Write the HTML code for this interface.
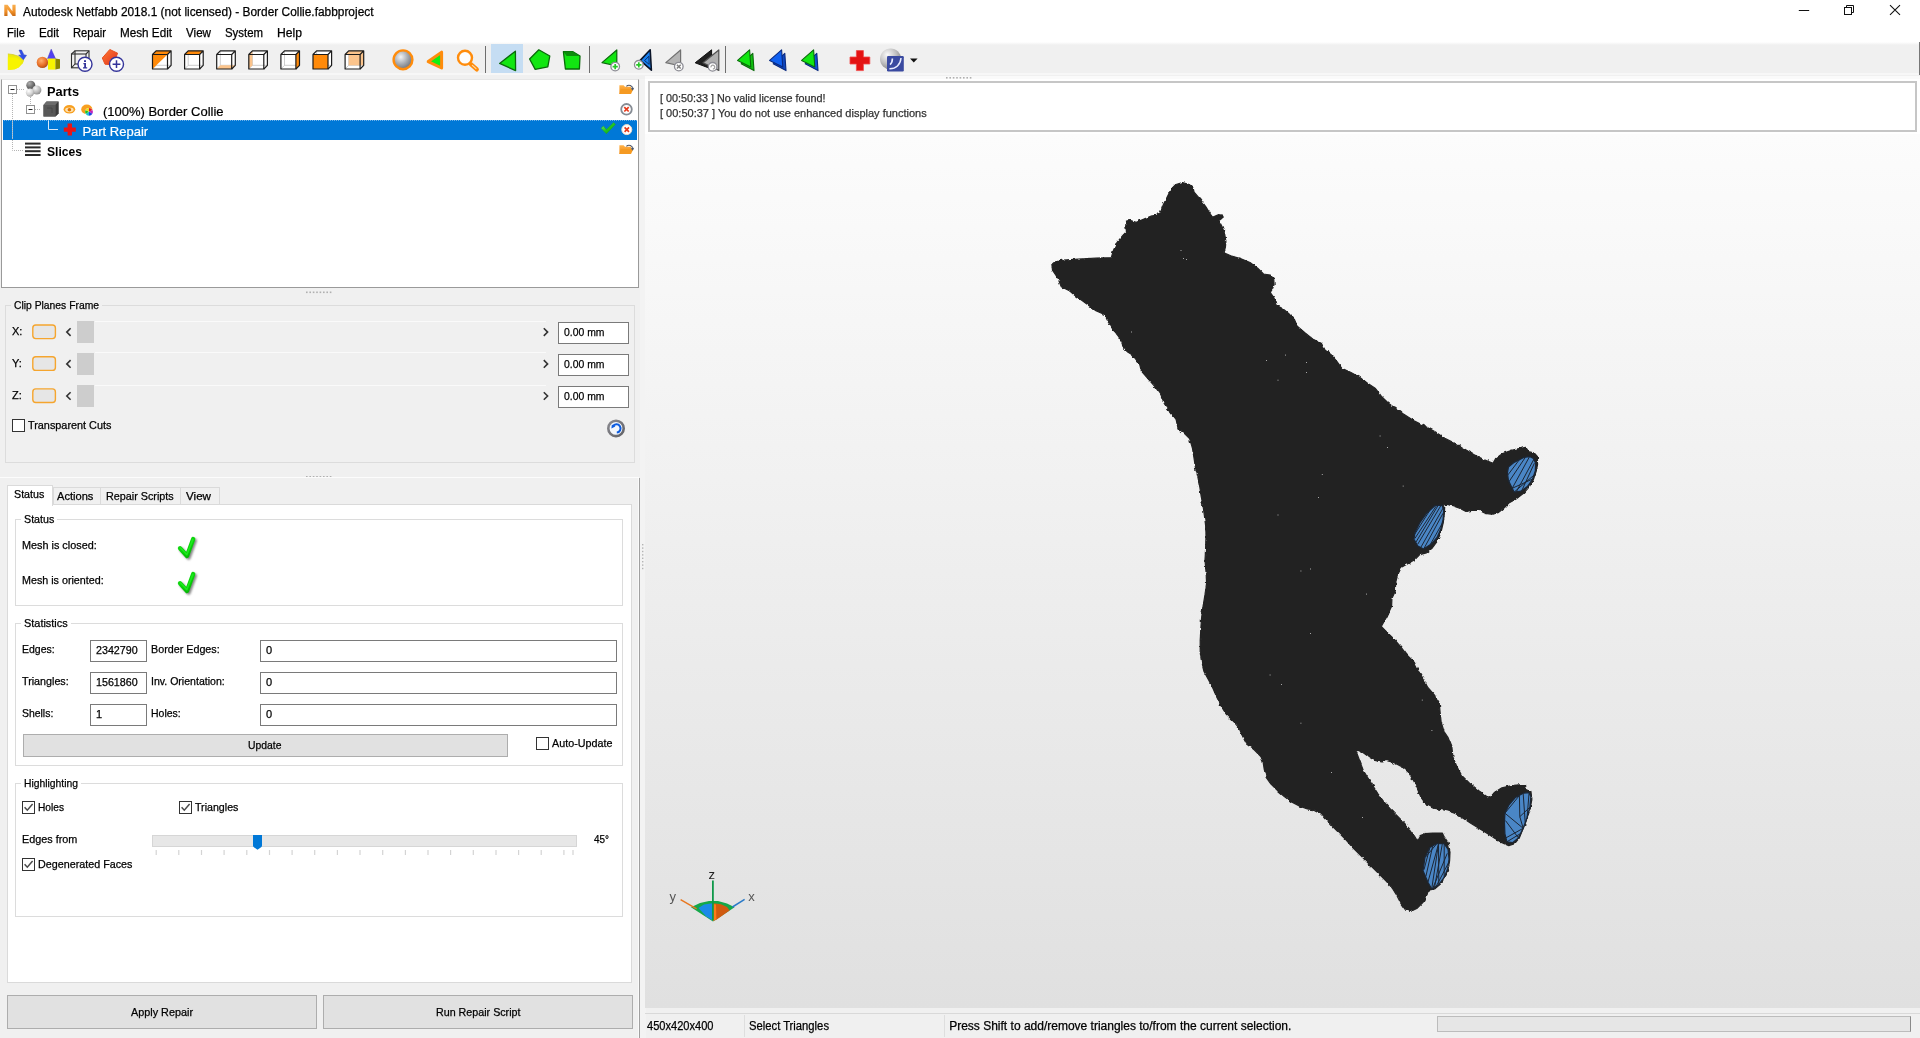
<!DOCTYPE html>
<html>
<head>
<meta charset="utf-8">
<title>Autodesk Netfabb 2018.1 (not licensed) - Border Collie.fabbproject</title>
<style>
*{box-sizing:border-box;margin:0;padding:0}
html,body{width:1920px;height:1038px;overflow:hidden;background:#f0f0f0;font-family:"Liberation Sans",sans-serif;font-size:11px;color:#000}
#app{position:relative;width:1920px;height:1038px;overflow:hidden;background:#f0f0f0;opacity:.9999}
.a{position:absolute}
.t{position:absolute;white-space:nowrap;transform-origin:0 50%;font-family:"Liberation Sans",sans-serif}
svg{position:absolute;overflow:visible}
</style>
</head>
<body>
<div id="app">
<div class="a" style="left:0px;top:0px;width:1920px;height:43px;background:#fff;"></div>
<div class="a" style="left:0px;top:42px;width:1920px;height:3px;background:linear-gradient(#fff,#f0f0f0);"></div>
<div class="t" style="left:23.0px;top:3.5px;font-size:12px;line-height:16px;color:#000;transform:scaleX(0.9914);-webkit-text-stroke:0.25px #000;">Autodesk Netfabb 2018.1 (not licensed) - Border Collie.fabbproject</div>
<div class="t" style="left:7.0px;top:25.0px;font-size:12px;line-height:16px;color:#000;transform:scaleX(0.9309);-webkit-text-stroke:0.25px #000;">File</div>
<div class="t" style="left:39.0px;top:25.0px;font-size:12px;line-height:16px;color:#000;transform:scaleX(0.9672);-webkit-text-stroke:0.25px #000;">Edit</div>
<div class="t" style="left:73.0px;top:25.0px;font-size:12px;line-height:16px;color:#000;transform:scaleX(0.9335);-webkit-text-stroke:0.25px #000;">Repair</div>
<div class="t" style="left:120.0px;top:25.0px;font-size:12px;line-height:16px;color:#000;transform:scaleX(0.9746);-webkit-text-stroke:0.25px #000;">Mesh Edit</div>
<div class="t" style="left:186.0px;top:25.0px;font-size:12px;line-height:16px;color:#000;transform:scaleX(0.9693);-webkit-text-stroke:0.25px #000;">View</div>
<div class="t" style="left:225.0px;top:25.0px;font-size:12px;line-height:16px;color:#000;transform:scaleX(0.9498);-webkit-text-stroke:0.25px #000;">System</div>
<div class="t" style="left:277.0px;top:25.0px;font-size:12px;line-height:16px;color:#000;transform:scaleX(1.0130);-webkit-text-stroke:0.25px #000;">Help</div>
<svg width="1920" height="44" viewBox="0 0 1920 44" style="left:0;top:0">
<defs><linearGradient id="gN" x1="0" y1="0" x2="0" y2="1"><stop offset="0" stop-color="#f9b050"/><stop offset="0.6" stop-color="#f09028"/><stop offset="1" stop-color="#c86a14"/></linearGradient></defs>
<path d="M4.3 16 V4.8 H7.6 L12.4 11.2 V4.8 H15.6 V16 H12.6 L7.5 9.2 V16 Z" fill="url(#gN)"/>
<path d="M1798.8 10.5 H1809.2" stroke="#111" stroke-width="1"/>
<path d="M1846.5 7.5 V5.5 H1853.5 V12.5 H1851.5" fill="none" stroke="#111" stroke-width="1"/>
<rect x="1844.5" y="7.5" width="7" height="7" fill="none" stroke="#111" stroke-width="1"/>
<path d="M1890 5.2 L1900 14.8 M1900 5.2 L1890 14.8" stroke="#111" stroke-width="1.1"/>
</svg>
<svg id="tbsvg" width="1920" height="80" viewBox="0 0 1920 80" style="left:0;top:0">
<defs>
<radialGradient id="gSph" cx="0.38" cy="0.35" r="0.7"><stop offset="0" stop-color="#f2f4f6"/><stop offset="0.55" stop-color="#a4a8ae"/><stop offset="1" stop-color="#6a6e76"/></radialGradient>
<radialGradient id="gOr" cx="0.4" cy="0.35" r="0.7"><stop offset="0" stop-color="#ffb070"/><stop offset="0.6" stop-color="#e87028"/><stop offset="1" stop-color="#a84810"/></radialGradient>
<linearGradient id="gRed" x1="0" y1="0" x2="1" y2="1"><stop offset="0" stop-color="#ff7a30"/><stop offset="1" stop-color="#e03020"/></linearGradient>
<radialGradient id="gSph2" cx="0.35" cy="0.3" r="0.75"><stop offset="0" stop-color="#fafafa"/><stop offset="0.55" stop-color="#c0c0c0"/><stop offset="1" stop-color="#848484"/></radialGradient>
</defs>
<rect x="491" y="44" width="32" height="31" fill="#c5ddf3"/>
<line x1="485.5" y1="46" x2="485.5" y2="74" stroke="#6e6e6e" stroke-width="1"/>
<line x1="589.5" y1="46" x2="589.5" y2="74" stroke="#6e6e6e" stroke-width="1"/>
<line x1="725.5" y1="46" x2="725.5" y2="74" stroke="#6e6e6e" stroke-width="1"/>
<path d="M7.9 53.9 L13 54.6 L18.7 56.3 L24 60.7 L22.7 63.5 L19 67.3 L14.9 69.2 L7.9 70 Z" fill="#ecea10"/>
<path d="M7.9 57.2 L16 57.6 L21.5 60.8 L19 67.3 L14.9 69.2 L7.9 70 Z" fill="#f8f400"/>
<path d="M7.9 53.9 L13 54.6 L18.7 56.3 L24 60.7" fill="none" stroke="#d4cc30" stroke-width="0.8"/>
<path d="M19 50.1 L21.5 50.1 L24 54.9 L26.5 55.3 L23.4 59.8 L18.7 55.1 L21.4 55.2 Z" fill="#3050e8" stroke="#2838b8" stroke-width="0.5" stroke-linejoin="round"/>
<circle cx="42.4" cy="62.4" r="5.7" fill="url(#gOr)"/>
<path d="M51.2 49.2 L55.4 58.5 L47.6 58.5 Z" fill="#5040f0" stroke="#3828c0" stroke-width="0.5"/>
<rect x="48" y="58.6" width="7.4" height="11" fill="#f8f400"/>
<path d="M55.4 58.6 L60 59.2 L60 68.4 L55.4 69.6 Z" fill="#8a8400"/>
<g fill="none" stroke="#303030" stroke-width="1.1"><rect x="71.5" y="54" width="14.5" height="13.8"/><rect x="75" y="50.8" width="14" height="13.2"/><path d="M71.5 54 L75 50.8 M86 54 L89 50.8 M71.5 67.8 L75 64"/></g>
<circle cx="85" cy="64.2" r="7" fill="#fff" stroke="#34349a" stroke-width="1.4"/>
<path d="M84 60.2 h2 v1.8 h-2z M83.4 63 h2.6 v4.2 h1.2 v1.2 h-4.2 v-1.2 h1.2 v-3 h-0.8z" fill="#34349a"/>
<path d="M102.3 58 L109.8 49.5 L117.6 53.2 L113 64.8 L105 64.2 Z" fill="url(#gRed)" stroke="#e85020" stroke-width="1" stroke-linejoin="round"/>
<circle cx="116.5" cy="64.2" r="7" fill="#fff" stroke="#34349a" stroke-width="1.4"/>
<path d="M112.6 64.2 h7.8 M116.5 60.3 v7.8" stroke="#34349a" stroke-width="1.5"/>
<path d="M152.5 54.5 L156.1 50.8 L171.1 50.8 L171.1 65.3 L167.5 69.0 L152.5 69.0 Z" fill="#fff"/><path d="M156.1 50.8 L156.1 65.3 L171.1 65.3 M156.1 65.3 L152.5 69.0" fill="none" stroke="#b8b8b8" stroke-width="0.7"/><path d="M152.5 54.5 L156.1 50.8 L171.1 50.8 L167.5 54.5 Z" fill="#ff8a0a"/><path d="M152.5 54.5 L167.5 54.5 L152.5 69.0 Z" fill="#ff8a0a"/><g fill="none" stroke="#1c1c1c" stroke-width="1.2" stroke-linejoin="round"><rect x="152.5" y="54.5" width="15" height="14.5"/><path d="M152.5 54.5 L156.1 50.8 L171.1 50.8 L171.1 65.3 L167.5 69.0 M167.5 54.5 L171.1 50.8"/></g>
<path d="M184.6 54.5 L188.2 50.8 L203.2 50.8 L203.2 65.3 L199.6 69.0 L184.6 69.0 Z" fill="#fff"/><path d="M188.2 50.8 L188.2 65.3 L203.2 65.3 M188.2 65.3 L184.6 69.0" fill="none" stroke="#b8b8b8" stroke-width="0.7"/><path d="M184.6 54.5 L188.2 50.8 L203.2 50.8 L199.6 54.5 Z" fill="#ff8a0a"/><g fill="none" stroke="#1c1c1c" stroke-width="1.2" stroke-linejoin="round"><rect x="184.6" y="54.5" width="15" height="14.5"/><path d="M184.6 54.5 L188.2 50.8 L203.2 50.8 L203.2 65.3 L199.6 69.0 M199.6 54.5 L203.2 50.8"/></g>
<path d="M216.7 54.5 L220.29999999999998 50.8 L235.29999999999998 50.8 L235.29999999999998 65.3 L231.7 69.0 L216.7 69.0 Z" fill="#fff"/><path d="M220.29999999999998 50.8 L220.29999999999998 65.3 L235.29999999999998 65.3 M220.29999999999998 65.3 L216.7 69.0" fill="none" stroke="#b8b8b8" stroke-width="0.7"/><path d="M216.7 69.0 L220.29999999999998 65.3 L235.29999999999998 65.3 L231.7 69.0 Z" fill="#fbc48c"/><g fill="none" stroke="#1c1c1c" stroke-width="1.2" stroke-linejoin="round"><rect x="216.7" y="54.5" width="15" height="14.5"/><path d="M216.7 54.5 L220.29999999999998 50.8 L235.29999999999998 50.8 L235.29999999999998 65.3 L231.7 69.0 M231.7 54.5 L235.29999999999998 50.8"/></g>
<path d="M248.8 54.5 L252.4 50.8 L267.40000000000003 50.8 L267.40000000000003 65.3 L263.8 69.0 L248.8 69.0 Z" fill="#fff"/><path d="M252.4 50.8 L252.4 65.3 L267.40000000000003 65.3 M252.4 65.3 L248.8 69.0" fill="none" stroke="#b8b8b8" stroke-width="0.7"/><path d="M248.8 54.5 L252.4 50.8 L252.4 65.3 L248.8 69.0 Z" fill="#fbc48c"/><g fill="none" stroke="#1c1c1c" stroke-width="1.2" stroke-linejoin="round"><rect x="248.8" y="54.5" width="15" height="14.5"/><path d="M248.8 54.5 L252.4 50.8 L267.40000000000003 50.8 L267.40000000000003 65.3 L263.8 69.0 M263.8 54.5 L267.40000000000003 50.8"/></g>
<path d="M280.9 54.5 L284.5 50.8 L299.5 50.8 L299.5 65.3 L295.9 69.0 L280.9 69.0 Z" fill="#fff"/><path d="M284.5 50.8 L284.5 65.3 L299.5 65.3 M284.5 65.3 L280.9 69.0" fill="none" stroke="#b8b8b8" stroke-width="0.7"/><path d="M295.9 54.5 L299.5 50.8 L299.5 65.3 L295.9 69.0 Z" fill="#ff8a0a"/><g fill="none" stroke="#1c1c1c" stroke-width="1.2" stroke-linejoin="round"><rect x="280.9" y="54.5" width="15" height="14.5"/><path d="M280.9 54.5 L284.5 50.8 L299.5 50.8 L299.5 65.3 L295.9 69.0 M295.9 54.5 L299.5 50.8"/></g>
<path d="M313.0 54.5 L316.6 50.8 L331.6 50.8 L331.6 65.3 L328.0 69.0 L313.0 69.0 Z" fill="#fff"/><path d="M316.6 50.8 L316.6 65.3 L331.6 65.3 M316.6 65.3 L313.0 69.0" fill="none" stroke="#b8b8b8" stroke-width="0.7"/><rect x="313.0" y="54.5" width="15" height="14.5" fill="#ff8a0a"/><g fill="none" stroke="#1c1c1c" stroke-width="1.2" stroke-linejoin="round"><rect x="313.0" y="54.5" width="15" height="14.5"/><path d="M313.0 54.5 L316.6 50.8 L331.6 50.8 L331.6 65.3 L328.0 69.0 M328.0 54.5 L331.6 50.8"/></g>
<path d="M345.1 54.5 L348.70000000000005 50.8 L363.70000000000005 50.8 L363.70000000000005 65.3 L360.1 69.0 L345.1 69.0 Z" fill="#fff"/><path d="M348.70000000000005 50.8 L348.70000000000005 65.3 L363.70000000000005 65.3 M348.70000000000005 65.3 L345.1 69.0" fill="none" stroke="#b8b8b8" stroke-width="0.7"/><rect x="348.70000000000005" y="50.8" width="15" height="14.5" fill="#fbc48c"/><path d="M345.1 54.5 L348.70000000000005 50.8 L363.70000000000005 50.8 L360.1 54.5 Z" fill="#fbc48c"/><g fill="none" stroke="#1c1c1c" stroke-width="1.2" stroke-linejoin="round"><rect x="345.1" y="54.5" width="15" height="14.5"/><path d="M345.1 54.5 L348.70000000000005 50.8 L363.70000000000005 50.8 L363.70000000000005 65.3 L360.1 69.0 M360.1 54.5 L363.70000000000005 50.8"/></g>
<circle cx="403" cy="59.8" r="9.4" fill="url(#gSph)" stroke="#ff8c0c" stroke-width="2.4"/>
<path d="M428.2 61.6 L441.6 52.2 L441.6 68 Z" fill="#10f010" stroke="#ff8c0c" stroke-width="3" stroke-linejoin="round"/>
<circle cx="465" cy="57.8" r="7" fill="#fdfdfd" stroke="#ff8c0c" stroke-width="2.4"/>
<path d="M470.8 64.2 L476.8 69.4" stroke="#ff8c0c" stroke-width="4.2" stroke-linecap="round"/>
<path d="M472.4 65.4 L476 68.6" stroke="#ffd9a8" stroke-width="1.2" stroke-linecap="round"/>
<path d="M499.6 63.4 L515.4 51.2 L515.6 70.6 Z" fill="#12e612" stroke="#0a6a0a" stroke-width="1.3" stroke-linejoin="round"/>
<path d="M529.6 59 L538.8 49.8 L549.8 56 L547.8 66.8 L535.2 69.4 Z" fill="#12e612" stroke="#0a6a0a" stroke-width="1.3" stroke-linejoin="round"/>
<path d="M563.4 51.6 L572.6 51.6 L580 56 L579.4 69 L565.4 69 Z" fill="#12e612" stroke="#0a6a0a" stroke-width="1.3" stroke-linejoin="round"/>
<path d="M563.4 51.6 L572.6 51.6 L580 56 L566.6 56 Z" fill="#0c8c0c"/>
<path d="M602 62.6 L616.8 50 L616.8 66 Z" fill="#12e612" stroke="#0a6a0a" stroke-width="1.2" stroke-linejoin="round"/>
<circle cx="615.2" cy="66.6" r="4.3" fill="#fff" stroke="#8c8c94" stroke-width="1.3"/><path d="M612.6 66.6 h5.2 M615.2 63.99999999999999 v5.2" stroke="#28c828" stroke-width="1.7"/>
<path d="M640.2 60.4 L650.2 49.8 L651.4 70.2 Z" fill="#1880f0" stroke="#0a1428" stroke-width="1.6" stroke-linejoin="round"/>
<path d="M644.6 60.6 L648.8 56.2 L649.2 64.4 Z" fill="none" stroke="#0a2a60" stroke-width="0.9"/>
<circle cx="638.8" cy="64.8" r="4.3" fill="#fff" stroke="#8c8c94" stroke-width="1.3"/><path d="M636.1999999999999 64.8 h5.2 M638.8 62.199999999999996 v5.2" stroke="#28c828" stroke-width="1.7"/>
<path d="M665.8 62.6 L680.6 50 L680.6 66 Z" fill="#b4b4b4" stroke="#707070" stroke-width="1.2" stroke-linejoin="round"/>
<circle cx="678.8" cy="66.6" r="4.3" fill="#fff" stroke="#8c8c94" stroke-width="1.3"/><path d="M676.9 64.69999999999999 l3.8 3.8 M680.6999999999999 64.69999999999999 l-3.8 3.8" stroke="#808080" stroke-width="1.5"/>
<path d="M695.2 62.8 L711.6 49.8 L711.6 69 Z" fill="#202020" stroke="#101010" stroke-width="1" stroke-linejoin="round"/>
<path d="M703 62.8 L718.8 50 L718.8 70.4 Z" fill="#b0b0b0" stroke="#505050" stroke-width="1.2" stroke-linejoin="round"/>
<circle cx="712.6" cy="66.8" r="4.3" fill="#fff" stroke="#8c8c94" stroke-width="1.3"/><path d="M711.0 67.39999999999999 a1.9 1.9 0 1 1 1.8 1.6" fill="none" stroke="#a0a0a0" stroke-width="1.2"/>
<path d="M741.2 63.8 L752.8000000000001 53.4 L754.0 70.6 Z" fill="#10c010" stroke="#0a6a0a" stroke-width="1.1" stroke-linejoin="round"/><path d="M737.6 60.4 L749.6 49.8 L750.8000000000001 67 Z" fill="#12e612" stroke="#0a6a0a" stroke-width="1.1" stroke-linejoin="round"/>
<path d="M773.2 63.8 L784.8000000000001 53.4 L786.0 70.6 Z" fill="#1048c0" stroke="#0a2a80" stroke-width="1.1" stroke-linejoin="round"/><path d="M769.6 60.4 L781.6 49.8 L782.8000000000001 67 Z" fill="#1060f0" stroke="#0a2a80" stroke-width="1.1" stroke-linejoin="round"/>
<path d="M805.2 63.8 L816.8000000000001 53.4 L818.0 70.6 Z" fill="#1050d8" stroke="#0a2a80" stroke-width="1.1" stroke-linejoin="round"/><path d="M801.6 60.4 L813.6 49.8 L814.8000000000001 67 Z" fill="#12e612" stroke="#0a6a0a" stroke-width="1.1" stroke-linejoin="round"/>
<path d="M856.4 50.6 h7 v6.4 h6.4 v7 h-6.4 v6.6 h-7 v-6.6 h-6.4 v-7 h6.4 Z" fill="#e41212" stroke="#f04a4a" stroke-width="0.8" stroke-linejoin="round"/>
<circle cx="890.6" cy="59" r="10.6" fill="url(#gSph2)"/>
<rect x="887" y="56" width="16.8" height="15.4" rx="1.2" fill="#3a4aa0"/>
<path d="M889.4 68.8 C896 69 900.4 64.6 901 58" fill="none" stroke="#e8ecff" stroke-width="1.5"/>
<path d="M892.4 58.6 C892.4 61.6 891.6 63.4 890 64.6" fill="none" stroke="#e8ecff" stroke-width="1.6"/>
<path d="M910 58.4 L917.6 58.4 L913.8 62.6 Z" fill="#111"/>
</svg>
<div class="a" style="left:0px;top:73px;width:1920px;height:2px;background:#f7f7f7;"></div>
<div class="a" style="left:645px;top:76px;width:1275px;height:3px;background:#fafafa;"></div>
<div class="a" style="left:1919px;top:42px;width:1px;height:33px;background:#777;"></div>
<div class="a" style="left:1px;top:79px;width:638px;height:209px;background:#fff;border:1px solid #9a9a9a;border-top-color:#e6e6e6;"></div>
<div class="a" style="left:3px;top:120px;width:634px;height:20px;background:#0078d7;"></div>
<div class="a" style="left:3px;top:120px;width:634px;height:1px;background:repeating-linear-gradient(90deg,#0078d7 0 1px,#6fb2ea 1px 2px)"></div>
<div class="t" style="left:46.9px;top:82.9px;font-size:13px;line-height:17px;color:#000;font-weight:bold;transform:scaleX(0.9840);">Parts</div>
<div class="t" style="left:102.9px;top:102.8px;font-size:13px;line-height:17px;color:#000;-webkit-text-stroke:0.2px #000;">(100%) Border Collie</div>
<div class="t" style="left:82.4px;top:122.8px;font-size:13px;line-height:17px;color:#fff;-webkit-text-stroke:0.2px #fff;">Part Repair</div>
<div class="t" style="left:46.9px;top:142.9px;font-size:13px;line-height:17px;color:#000;font-weight:bold;transform:scaleX(0.9312);">Slices</div>
<svg width="640" height="170" viewBox="0 0 640 170" style="left:0;top:0">
<defs>
<radialGradient id="tS1" cx="0.35" cy="0.3" r="0.8"><stop offset="0" stop-color="#ffffff"/><stop offset="0.6" stop-color="#cfcfcf"/><stop offset="1" stop-color="#8a8a8a"/></radialGradient>
<radialGradient id="tS3" cx="0.35" cy="0.3" r="0.8"><stop offset="0" stop-color="#f4f4f4"/><stop offset="0.6" stop-color="#b8b8b8"/><stop offset="1" stop-color="#808080"/></radialGradient>
<radialGradient id="tS2" cx="0.35" cy="0.3" r="0.8"><stop offset="0" stop-color="#b0b0b0"/><stop offset="0.6" stop-color="#6a6a6a"/><stop offset="1" stop-color="#3c3c3c"/></radialGradient>
<linearGradient id="tFo" x1="0" y1="0" x2="0" y2="1"><stop offset="0" stop-color="#ffb24a"/><stop offset="1" stop-color="#f08a10"/></linearGradient>
<linearGradient id="tCk" x1="0" y1="0" x2="1" y2="1"><stop offset="0" stop-color="#7ef07e"/><stop offset="0.5" stop-color="#22c822"/><stop offset="1" stop-color="#0a9a0a"/></linearGradient>
</defs>
<!-- tree lines -->
<g stroke="#b4b4b4" stroke-width="1" stroke-dasharray="1 1" fill="none">
<path d="M12.5 94 V150.5 H24"/><path d="M17 89.5 H24"/><path d="M30.5 97 V105"/><path d="M35 109.5 H41"/>
</g>
<path d="M12.5 121 V139" stroke="#9cc8f0" stroke-width="1" stroke-dasharray="1 1"/>
<path d="M48.5 120.5 V129.5 H58" fill="none" stroke="#d8e8f8" stroke-width="1"/>
<!-- expand boxes -->
<g fill="#fff" stroke="#919191" stroke-width="1"><rect x="8.5" y="85.5" width="8" height="8"/><rect x="26.5" y="105.5" width="8" height="8"/></g>
<path d="M10.5 89.5 H14.5 M28.5 109.5 H32.5" stroke="#222" stroke-width="1"/>
<!-- parts icon: 3 spheres -->
<circle cx="30.8" cy="85.2" r="4.5" fill="url(#tS2)"/>
<circle cx="36.8" cy="90" r="4.6" fill="url(#tS3)"/>
<circle cx="30" cy="92.6" r="4.2" fill="url(#tS1)"/>
<!-- dark cube icon -->
<path d="M43.5 105 L46.5 101.5 L58.5 101.5 L58.5 113.5 L55.5 116.5 L43.5 116.5 Z" fill="#505050"/>
<path d="M43.5 105 L46.5 101.5 L58.5 101.5 L55.5 105 Z" fill="#6c6c6c"/>
<path d="M55.5 105 L58.5 101.5 L58.5 113.5 L55.5 116.5 Z" fill="#3c3c3c"/>
<rect x="43.5" y="105" width="12" height="11.5" fill="#585858"/>
<path d="M47 108 h5 v5" fill="none" stroke="#444" stroke-width="0.8"/>
<!-- eye -->
<ellipse cx="69.4" cy="109.3" rx="5.8" ry="4.3" fill="#f8a020"/>
<ellipse cx="69.4" cy="109.8" rx="4.2" ry="2.4" fill="#fde2b0"/>
<circle cx="69.4" cy="109.8" r="1.8" fill="#e07808"/>
<!-- palette -->
<ellipse cx="86.8" cy="109.4" rx="5.6" ry="4.8" fill="#f8a020"/>
<circle cx="89" cy="111.8" r="3.9" fill="#fff"/>
<path d="M89 111.8 L89 107.9 A3.9 3.9 0 0 1 92.4 109.9 Z" fill="#e02020"/>
<path d="M89 111.8 L92.4 109.9 A3.9 3.9 0 0 1 92.4 113.8 Z" fill="#c020c0"/>
<path d="M89 111.8 L92.4 113.8 A3.9 3.9 0 0 1 89 115.7 Z" fill="#2040e0"/>
<path d="M89 111.8 L89 115.7 A3.9 3.9 0 0 1 85.6 113.8 Z" fill="#20c0d0"/>
<path d="M89 111.8 L85.6 113.8 A3.9 3.9 0 0 1 85.6 109.9 Z" fill="#20c020"/>
<path d="M89 111.8 L85.6 109.9 A3.9 3.9 0 0 1 89 107.9 Z" fill="#e8e020"/>
<!-- red cross -->
<path d="M67.6 123.6 h4.4 v3.8 h3.8 v4.4 h-3.8 v3.8 h-4.4 v-3.8 h-3.8 v-4.4 h3.8 Z" fill="#e81414"/>
<!-- slices icon -->
<g fill="#2a2a2a"><rect x="25" y="142.6" width="15.6" height="2"/><rect x="25" y="146.4" width="15.6" height="2"/><rect x="25" y="150.2" width="15.6" height="2"/><rect x="25" y="154" width="15.6" height="2"/></g>
<!-- right icons: folders -->
<g id="fold1"><path d="M619.4 85.2 h4.2 l1.4 1.6 h6 v7.2 h-11.6 Z" fill="url(#tFo)"/><path d="M621.2 89 h12.2 l-2.4 5 h-11.6 Z" fill="#f59a22"/><path d="M626.4 86.4 a3.6 3.6 0 0 1 6.2 2.6" fill="none" stroke="#505868" stroke-width="1.2"/><path d="M630.8 88.2 l2 2.6 l1.4 -3 Z" fill="#505868"/></g>
<use href="#fold1" y="60"/>
<!-- circle-x icons -->
<circle cx="626.5" cy="109.3" r="5.3" fill="#fff" stroke="#868c94" stroke-width="1.8"/>
<path d="M624.3 107.1 l4.4 4.4 M628.7 107.1 l-4.4 4.4" stroke="#e83a1a" stroke-width="1.7"/>
<circle cx="626.8" cy="129.6" r="5" fill="#fff" stroke="#f2dcc8" stroke-width="1"/>
<path d="M624.6 127.4 l4.4 4.4 M629 127.4 l-4.4 4.4" stroke="#e83a1a" stroke-width="1.7"/>
<!-- green check in row -->
<path d="M601 128.2 L603.4 126 L606.4 129.6 L613.6 122.6 L615.4 124.4 L606.4 133.8 Z" fill="url(#tCk)" stroke="#2a9a2a" stroke-width="0.5"/>
</svg>
<svg width="1920" height="1038" viewBox="0 0 1920 1038" style="left:0;top:0;pointer-events:none"><rect x="306.0" y="291.5" width="1.6" height="1.6" fill="#b0b0b0"/><rect x="309.4" y="291.5" width="1.6" height="1.6" fill="#b0b0b0"/><rect x="312.8" y="291.5" width="1.6" height="1.6" fill="#b0b0b0"/><rect x="316.2" y="291.5" width="1.6" height="1.6" fill="#b0b0b0"/><rect x="319.6" y="291.5" width="1.6" height="1.6" fill="#b0b0b0"/><rect x="323.0" y="291.5" width="1.6" height="1.6" fill="#b0b0b0"/><rect x="326.4" y="291.5" width="1.6" height="1.6" fill="#b0b0b0"/><rect x="329.8" y="291.5" width="1.6" height="1.6" fill="#b0b0b0"/></svg>
<svg width="1920" height="1038" viewBox="0 0 1920 1038" style="left:0;top:0;pointer-events:none"><rect x="306.0" y="476" width="1.6" height="1.6" fill="#b0b0b0"/><rect x="309.4" y="476" width="1.6" height="1.6" fill="#b0b0b0"/><rect x="312.8" y="476" width="1.6" height="1.6" fill="#b0b0b0"/><rect x="316.2" y="476" width="1.6" height="1.6" fill="#b0b0b0"/><rect x="319.6" y="476" width="1.6" height="1.6" fill="#b0b0b0"/><rect x="323.0" y="476" width="1.6" height="1.6" fill="#b0b0b0"/><rect x="326.4" y="476" width="1.6" height="1.6" fill="#b0b0b0"/><rect x="329.8" y="476" width="1.6" height="1.6" fill="#b0b0b0"/></svg>
<div class="a" style="left:5px;top:305px;width:630px;height:158px;border:1px solid #dcdcdc;"></div>
<div class="a" style="left:11px;top:298px;width:91px;height:14px;background:#f0f0f0;"></div>
<div class="t" style="left:14.0px;top:297.5px;font-size:11px;line-height:15px;color:#000;transform:scaleX(0.9394);-webkit-text-stroke:0.25px #000;">Clip Planes Frame</div>
<div class="t" style="left:12.0px;top:324.0px;font-size:11px;line-height:15px;color:#000;-webkit-text-stroke:0.25px #000;">X:</div>
<div class="a" style="left:95px;top:321px;width:451px;height:1px;background:#fafafa;"></div>
<div class="a" style="left:77px;top:321px;width:17px;height:22px;background:#cdcdcd;"></div>
<div class="a" style="left:558px;top:322px;width:71px;height:22px;background:#fff;border:1px solid #7a7a7a;"></div>
<div class="t" style="left:564.3px;top:325.0px;font-size:11px;line-height:15px;color:#000;transform:scaleX(0.9464);-webkit-text-stroke:0.25px #000;">0.00 mm</div>
<div class="t" style="left:12.0px;top:355.8px;font-size:11px;line-height:15px;color:#000;-webkit-text-stroke:0.25px #000;">Y:</div>
<div class="a" style="left:95px;top:352px;width:451px;height:1px;background:#fafafa;"></div>
<div class="a" style="left:77px;top:353px;width:17px;height:22px;background:#cdcdcd;"></div>
<div class="a" style="left:558px;top:354px;width:71px;height:22px;background:#fff;border:1px solid #7a7a7a;"></div>
<div class="t" style="left:564.3px;top:356.8px;font-size:11px;line-height:15px;color:#000;transform:scaleX(0.9464);-webkit-text-stroke:0.25px #000;">0.00 mm</div>
<div class="t" style="left:12.0px;top:387.9px;font-size:11px;line-height:15px;color:#000;-webkit-text-stroke:0.25px #000;">Z:</div>
<div class="a" style="left:95px;top:385px;width:451px;height:1px;background:#fafafa;"></div>
<div class="a" style="left:77px;top:385px;width:17px;height:22px;background:#cdcdcd;"></div>
<div class="a" style="left:558px;top:386px;width:71px;height:22px;background:#fff;border:1px solid #7a7a7a;"></div>
<div class="t" style="left:564.3px;top:388.9px;font-size:11px;line-height:15px;color:#000;transform:scaleX(0.9464);-webkit-text-stroke:0.25px #000;">0.00 mm</div>
<svg width="640" height="480" viewBox="0 0 640 480" style="left:0;top:0">
<rect x="32.8" y="325.0" width="22.6" height="13.6" rx="3" fill="#e6e6e6" stroke="#f5a52e" stroke-width="1.4"/>
<path d="M70.6 328.3 L66.8 332.1 L70.6 335.9" fill="none" stroke="#333" stroke-width="1.6"/>
<path d="M543.8 328.3 L547.6 332.1 L543.8 335.9" fill="none" stroke="#333" stroke-width="1.6"/>
<rect x="32.8" y="356.8" width="22.6" height="13.6" rx="3" fill="#e6e6e6" stroke="#f5a52e" stroke-width="1.4"/>
<path d="M70.6 360.1 L66.8 363.9 L70.6 367.7" fill="none" stroke="#333" stroke-width="1.6"/>
<path d="M543.8 360.1 L547.6 363.9 L543.8 367.7" fill="none" stroke="#333" stroke-width="1.6"/>
<rect x="32.8" y="388.9" width="22.6" height="13.6" rx="3" fill="#e6e6e6" stroke="#f5a52e" stroke-width="1.4"/>
<path d="M70.6 392.2 L66.8 396.0 L70.6 399.8" fill="none" stroke="#333" stroke-width="1.6"/>
<path d="M543.8 392.2 L547.6 396.0 L543.8 399.8" fill="none" stroke="#333" stroke-width="1.6"/>
<defs><linearGradient id="rI" x1="0" y1="0" x2="1" y2="1"><stop offset="0" stop-color="#8a8a90"/><stop offset="1" stop-color="#626266"/></linearGradient></defs>
<circle cx="616" cy="428.4" r="7.7" fill="#f2f6fc" stroke="url(#rI)" stroke-width="2.6"/>
<path d="M616.8 432.5 A4.1 4.1 0 1 0 612.9 426.4" fill="none" stroke="#0c5ce0" stroke-width="2.1"/>
<path d="M611.4 428.6 L611.9 424.6 L615.4 426.6 Z" fill="#0c5ce0"/>
</svg>
<div class="a" style="left:12px;top:419px;width:13px;height:13px;background:#fff;border:1px solid #333;"></div>
<div class="t" style="left:28.3px;top:418.0px;font-size:11px;line-height:15px;color:#000;transform:scaleX(0.9861);-webkit-text-stroke:0.25px #000;">Transparent Cuts</div>
<div class="a" style="left:0px;top:477px;width:639px;height:1px;background:#fcfcfc;"></div>
<div class="a" style="left:7px;top:504px;width:625px;height:479px;background:#fff;border:1px solid #dadada;"></div>
<div class="a" style="left:52.5px;top:487px;width:48.0px;height:18px;background:#f0f0f0;border:1px solid #dadada;"></div>
<div class="t" style="left:57.3px;top:488.5px;font-size:11px;line-height:15px;color:#000;transform:scaleX(1.0090);-webkit-text-stroke:0.25px #000;">Actions</div>
<div class="a" style="left:99.5px;top:487px;width:81.5px;height:18px;background:#f0f0f0;border:1px solid #dadada;"></div>
<div class="t" style="left:106.0px;top:488.5px;font-size:11px;line-height:15px;color:#000;transform:scaleX(0.9800);-webkit-text-stroke:0.25px #000;">Repair Scripts</div>
<div class="a" style="left:180px;top:487px;width:40px;height:18px;background:#f0f0f0;border:1px solid #dadada;"></div>
<div class="t" style="left:186.0px;top:488.5px;font-size:11px;line-height:15px;color:#000;transform:scaleX(1.0573);-webkit-text-stroke:0.25px #000;">View</div>
<div class="a" style="left:7px;top:485px;width:45.5px;height:20.5px;background:#fff;border:1px solid #dadada;border-bottom:none;"></div>
<div class="t" style="left:14.0px;top:486.5px;font-size:11px;line-height:15px;color:#000;transform:scaleX(0.9716);-webkit-text-stroke:0.25px #000;">Status</div>
<div class="a" style="left:15px;top:519px;width:608px;height:87px;border:1px solid #dcdcdc;"></div>
<div class="a" style="left:21px;top:512px;width:36.3px;height:14px;background:#fff;"></div>
<div class="t" style="left:24.0px;top:511.5px;font-size:11px;line-height:15px;color:#000;transform:scaleX(0.9716);-webkit-text-stroke:0.25px #000;">Status</div>
<div class="t" style="left:22.0px;top:537.5px;font-size:11px;line-height:15px;color:#000;transform:scaleX(0.9853);-webkit-text-stroke:0.25px #000;">Mesh is closed:</div>
<div class="t" style="left:22.0px;top:572.5px;font-size:11px;line-height:15px;color:#000;transform:scaleX(0.9753);-webkit-text-stroke:0.25px #000;">Mesh is oriented:</div>
<div class="a" style="left:15px;top:623px;width:608px;height:143px;border:1px solid #dcdcdc;"></div>
<div class="a" style="left:21px;top:616px;width:49.7px;height:14px;background:#fff;"></div>
<div class="t" style="left:24.0px;top:615.5px;font-size:11px;line-height:15px;color:#000;transform:scaleX(0.9929);-webkit-text-stroke:0.25px #000;">Statistics</div>
<div class="t" style="left:22.0px;top:641.8px;font-size:11px;line-height:15px;color:#000;transform:scaleX(0.9548);-webkit-text-stroke:0.25px #000;">Edges:</div>
<div class="a" style="left:90px;top:640px;width:57px;height:22px;background:#fff;border:1px solid #7a7a7a;"></div>
<div class="t" style="left:96.0px;top:642.6px;font-size:11px;line-height:15px;color:#000;transform:scaleX(0.9737);-webkit-text-stroke:0.25px #000;">2342790</div>
<div class="t" style="left:151.0px;top:641.8px;font-size:11px;line-height:15px;color:#000;transform:scaleX(0.9769);-webkit-text-stroke:0.25px #000;">Border Edges:</div>
<div class="a" style="left:260px;top:640px;width:357px;height:22px;background:#fff;border:1px solid #7a7a7a;"></div>
<div class="t" style="left:266.0px;top:642.6px;font-size:11px;line-height:15px;color:#000;-webkit-text-stroke:0.25px #000;">0</div>
<div class="t" style="left:22.0px;top:673.8px;font-size:11px;line-height:15px;color:#000;transform:scaleX(0.9751);-webkit-text-stroke:0.25px #000;">Triangles:</div>
<div class="a" style="left:90px;top:672px;width:57px;height:22px;background:#fff;border:1px solid #7a7a7a;"></div>
<div class="t" style="left:96.0px;top:674.6px;font-size:11px;line-height:15px;color:#000;transform:scaleX(0.9737);-webkit-text-stroke:0.25px #000;">1561860</div>
<div class="t" style="left:151.0px;top:673.8px;font-size:11px;line-height:15px;color:#000;transform:scaleX(0.9591);-webkit-text-stroke:0.25px #000;">Inv. Orientation:</div>
<div class="a" style="left:260px;top:672px;width:357px;height:22px;background:#fff;border:1px solid #7a7a7a;"></div>
<div class="t" style="left:266.0px;top:674.6px;font-size:11px;line-height:15px;color:#000;-webkit-text-stroke:0.25px #000;">0</div>
<div class="t" style="left:22.0px;top:705.8px;font-size:11px;line-height:15px;color:#000;transform:scaleX(0.9480);-webkit-text-stroke:0.25px #000;">Shells:</div>
<div class="a" style="left:90px;top:704px;width:57px;height:22px;background:#fff;border:1px solid #7a7a7a;"></div>
<div class="t" style="left:96.0px;top:706.6px;font-size:11px;line-height:15px;color:#000;-webkit-text-stroke:0.25px #000;">1</div>
<div class="t" style="left:151.0px;top:705.8px;font-size:11px;line-height:15px;color:#000;transform:scaleX(0.9525);-webkit-text-stroke:0.25px #000;">Holes:</div>
<div class="a" style="left:260px;top:704px;width:357px;height:22px;background:#fff;border:1px solid #7a7a7a;"></div>
<div class="t" style="left:266.0px;top:706.6px;font-size:11px;line-height:15px;color:#000;-webkit-text-stroke:0.25px #000;">0</div>
<div class="a" style="left:23px;top:734px;width:485px;height:23px;background:#e1e1e1;border:1px solid #adadad;"></div>
<div class="t" style="left:248.3px;top:737.8px;font-size:11px;line-height:15px;color:#000;transform:scaleX(0.9415);-webkit-text-stroke:0.25px #000;">Update</div>
<div class="a" style="left:536px;top:737px;width:13px;height:13px;background:#fff;border:1px solid #333;"></div>
<div class="t" style="left:552.3px;top:735.8px;font-size:11px;line-height:15px;color:#000;transform:scaleX(0.9779);-webkit-text-stroke:0.25px #000;">Auto-Update</div>
<div class="a" style="left:15px;top:783px;width:608px;height:134px;border:1px solid #dcdcdc;"></div>
<div class="a" style="left:21px;top:776px;width:60px;height:14px;background:#fff;"></div>
<div class="t" style="left:24.0px;top:775.5px;font-size:11px;line-height:15px;color:#000;transform:scaleX(0.9393);-webkit-text-stroke:0.25px #000;">Highlighting</div>
<div class="a" style="left:22px;top:801px;width:13px;height:13px;background:#fff;border:1px solid #333;"></div>
<svg width="13" height="13" viewBox="0 0 13 13" style="left:22px;top:801px"><path d="M2.6 6.2 L5.3 9.2 L10.6 3" fill="none" stroke="#4c4c4c" stroke-width="1.5"/></svg>
<div class="t" style="left:38.3px;top:799.8px;font-size:11px;line-height:15px;color:#000;transform:scaleX(0.9244);-webkit-text-stroke:0.25px #000;">Holes</div>
<div class="a" style="left:179px;top:801px;width:13px;height:13px;background:#fff;border:1px solid #333;"></div>
<svg width="13" height="13" viewBox="0 0 13 13" style="left:179px;top:801px"><path d="M2.6 6.2 L5.3 9.2 L10.6 3" fill="none" stroke="#4c4c4c" stroke-width="1.5"/></svg>
<div class="t" style="left:195.3px;top:799.8px;font-size:11px;line-height:15px;color:#000;transform:scaleX(0.9680);-webkit-text-stroke:0.25px #000;">Triangles</div>
<div class="t" style="left:22.0px;top:831.8px;font-size:11px;line-height:15px;color:#000;transform:scaleX(0.9831);-webkit-text-stroke:0.25px #000;">Edges from</div>
<div class="a" style="left:152px;top:835px;width:425px;height:12px;background:#e7e7e7;border:1px solid #d6d6d6;"></div>
<svg width="640" height="30" viewBox="0 830 640 30" style="left:0;top:830px"><path d="M253 835 H262 V845.6 Q262 846.4 261.4 847 L257.5 849.8 L253.6 847 Q253 846.4 253 845.6 Z" fill="#0078d7"/><rect x="155.6" y="850" width="1.2" height="5" fill="#d4d4d4"/><rect x="178.2" y="850" width="1.2" height="5" fill="#d4d4d4"/><rect x="200.9" y="850" width="1.2" height="5" fill="#d4d4d4"/><rect x="223.5" y="850" width="1.2" height="5" fill="#d4d4d4"/><rect x="246.2" y="850" width="1.2" height="5" fill="#d4d4d4"/><rect x="268.9" y="850" width="1.2" height="5" fill="#d4d4d4"/><rect x="291.5" y="850" width="1.2" height="5" fill="#d4d4d4"/><rect x="314.1" y="850" width="1.2" height="5" fill="#d4d4d4"/><rect x="336.8" y="850" width="1.2" height="5" fill="#d4d4d4"/><rect x="359.4" y="850" width="1.2" height="5" fill="#d4d4d4"/><rect x="382.1" y="850" width="1.2" height="5" fill="#d4d4d4"/><rect x="404.8" y="850" width="1.2" height="5" fill="#d4d4d4"/><rect x="427.4" y="850" width="1.2" height="5" fill="#d4d4d4"/><rect x="450.0" y="850" width="1.2" height="5" fill="#d4d4d4"/><rect x="472.7" y="850" width="1.2" height="5" fill="#d4d4d4"/><rect x="495.4" y="850" width="1.2" height="5" fill="#d4d4d4"/><rect x="518.0" y="850" width="1.2" height="5" fill="#d4d4d4"/><rect x="540.6" y="850" width="1.2" height="5" fill="#d4d4d4"/><rect x="563.3" y="850" width="1.2" height="5" fill="#d4d4d4"/><rect x="572.4" y="850" width="1.2" height="5" fill="#d4d4d4"/></svg>
<div class="t" style="left:594.3px;top:831.8px;font-size:11px;line-height:15px;color:#000;transform:scaleX(0.9017);-webkit-text-stroke:0.25px #000;">45°</div>
<div class="a" style="left:22px;top:858px;width:13px;height:13px;background:#fff;border:1px solid #333;"></div>
<svg width="13" height="13" viewBox="0 0 13 13" style="left:22px;top:858px"><path d="M2.6 6.2 L5.3 9.2 L10.6 3" fill="none" stroke="#4c4c4c" stroke-width="1.5"/></svg>
<div class="t" style="left:38.3px;top:856.8px;font-size:11px;line-height:15px;color:#000;transform:scaleX(0.9770);-webkit-text-stroke:0.25px #000;">Degenerated Faces</div>
<svg width="640" height="120" viewBox="0 520 640 120" style="left:0;top:520px">
<defs><linearGradient id="bCk" gradientUnits="userSpaceOnUse" x1="179" y1="537" x2="196" y2="558"><stop offset="0" stop-color="#20e020"/><stop offset="0.5" stop-color="#08d008"/><stop offset="1" stop-color="#06a806"/></linearGradient>
<filter id="bSh" x="-30%" y="-30%" width="160%" height="160%"><feGaussianBlur stdDeviation="0.9"/></filter></defs>
<g id="bigck"><path d="M180 548.2 L187 556 L193.2 539" fill="none" stroke="#5a5a5a" stroke-width="4.2" stroke-linecap="round" stroke-linejoin="round" opacity="0.75" filter="url(#bSh)" transform="translate(1.6,1.6)"/>
<path d="M180 548.2 L187 556 L193.2 539" fill="none" stroke="url(#bCk)" stroke-width="4.3" stroke-linecap="round" stroke-linejoin="round"/>
<path d="M180.6 548 L186.8 554.6 L192.8 539.6" fill="none" stroke="#22f022" stroke-width="1.6" stroke-linecap="round" stroke-linejoin="round" opacity="0.8"/></g>
<use href="#bigck" y="35"/>
</svg>
<div class="a" style="left:7px;top:995px;width:310px;height:34px;background:#e1e1e1;border:1px solid #adadad;"></div>
<div class="a" style="left:323px;top:995px;width:310px;height:34px;background:#e1e1e1;border:1px solid #adadad;"></div>
<div class="t" style="left:131.0px;top:1004.8px;font-size:11px;line-height:15px;color:#000;transform:scaleX(0.9844);-webkit-text-stroke:0.25px #000;">Apply Repair</div>
<div class="t" style="left:436.0px;top:1004.8px;font-size:11px;line-height:15px;color:#000;transform:scaleX(0.9733);-webkit-text-stroke:0.25px #000;">Run Repair Script</div>
<div class="a" style="left:640px;top:79px;width:6px;height:959px;background:#f3f3f3;"></div>
<div class="a" style="left:639px;top:478px;width:1px;height:560px;background:#a0a0a0;"></div>
<div class="a" style="left:638px;top:478px;width:1px;height:560px;background:#fafafa;"></div>
<svg width="1920" height="1038" viewBox="0 0 1920 1038" style="left:0;top:0;pointer-events:none"><rect x="946.0" y="77" width="1.6" height="1.6" fill="#b0b0b0"/><rect x="949.4" y="77" width="1.6" height="1.6" fill="#b0b0b0"/><rect x="952.8" y="77" width="1.6" height="1.6" fill="#b0b0b0"/><rect x="956.2" y="77" width="1.6" height="1.6" fill="#b0b0b0"/><rect x="959.6" y="77" width="1.6" height="1.6" fill="#b0b0b0"/><rect x="963.0" y="77" width="1.6" height="1.6" fill="#b0b0b0"/><rect x="966.4" y="77" width="1.6" height="1.6" fill="#b0b0b0"/><rect x="969.8" y="77" width="1.6" height="1.6" fill="#b0b0b0"/></svg>
<svg width="10" height="40" viewBox="0 0 10 40" style="left:638px;top:542px"><rect x="4" y="2.0" width="1.4" height="1.4" fill="#b4b4b4"/><rect x="4" y="5.4" width="1.4" height="1.4" fill="#b4b4b4"/><rect x="4" y="8.8" width="1.4" height="1.4" fill="#b4b4b4"/><rect x="4" y="12.2" width="1.4" height="1.4" fill="#b4b4b4"/><rect x="4" y="15.6" width="1.4" height="1.4" fill="#b4b4b4"/><rect x="4" y="19.0" width="1.4" height="1.4" fill="#b4b4b4"/><rect x="4" y="22.4" width="1.4" height="1.4" fill="#b4b4b4"/><rect x="4" y="25.8" width="1.4" height="1.4" fill="#b4b4b4"/></svg>
<div class="a" style="left:645px;top:79px;width:1275px;height:56px;background:#fff;"></div>
<div class="a" style="left:645px;top:134px;width:1275px;height:874px;background:linear-gradient(#fcfcfc,#e0e0e0);"></div>
<div class="a" style="left:648px;top:81px;width:1269px;height:51px;background:#fff;border:2px solid #c6c6c6;"></div>
<div class="t" style="left:660.0px;top:91.3px;font-size:11px;line-height:15px;color:#333;transform:scaleX(0.9811);-webkit-text-stroke:0.25px #333;">[ 00:50:33 ] No valid license found!</div>
<div class="t" style="left:660.0px;top:105.5px;font-size:11px;line-height:15px;color:#333;-webkit-text-stroke:0.25px #333;">[ 00:50:37 ] You do not use enhanced display functions</div>
<svg id="scene" width="1920" height="1038" viewBox="0 0 1920 1038" style="left:0;top:0">
<defs><filter id="fur" x="1040" y="175" width="510" height="745" filterUnits="userSpaceOnUse"><feTurbulence type="fractalNoise" baseFrequency="0.22" numOctaves="2" seed="7" result="n"/><feDisplacementMap in="SourceGraphic" in2="n" scale="3.2" xChannelSelector="R" yChannelSelector="G"/></filter></defs>
<path d="M1051.9 264.4 L1054.5 262.1 L1063.1 260.2 L1078.5 259.0 L1095.9 258.2 L1111.3 257.7 L1113.2 250.9 L1117.1 242.3 L1122.9 235.5 L1126.7 231.3 L1125.7 225.9 L1126.3 221.1 L1130.6 220.5 L1136.3 222.4 L1144.0 219.1 L1150.8 216.2 L1155.6 215.3 L1160.4 212.8 L1163.3 204.7 L1167.2 197.0 L1171.0 189.3 L1175.8 184.5 L1182.6 182.7 L1189.3 184.5 L1193.2 188.3 L1194.1 192.2 L1199.9 198.9 L1205.7 206.6 L1210.5 214.3 L1212.4 217.2 L1218.2 214.7 L1223.0 215.3 L1223.0 218.2 L1219.2 221.1 L1222.1 226.8 L1224.6 233.6 L1225.9 241.3 L1225.4 247.1 L1224.0 252.9 L1230.8 255.7 L1240.4 258.6 L1250.0 262.5 L1257.7 268.3 L1263.5 274.0 L1270.2 275.0 L1273.7 278.9 L1274.1 284.6 L1272.2 289.5 L1270.2 292.4 L1274.1 298.1 L1276.0 304.9 L1282.8 308.7 L1288.6 313.5 L1294.3 319.3 L1297.2 326.1 L1304.9 332.8 L1313.6 339.6 L1321.3 343.4 L1325.2 350.2 L1331.2 354.8 L1337.0 361.6 L1341.8 368.3 L1350.5 372.2 L1359.2 377.0 L1366.9 382.8 L1375.5 388.5 L1381.3 396.2 L1388.1 403.0 L1392.8 406.4 L1403.4 414.1 L1414.0 420.8 L1425.5 426.6 L1436.1 432.4 L1444.8 438.2 L1454.4 443.0 L1464.0 448.8 L1473.7 454.5 L1483.3 459.4 L1493.0 463.2 L1495.8 458.4 L1502.6 453.6 L1510.3 450.7 L1518.0 448.8 L1525.7 447.4 L1528.6 451.7 L1534.4 453.2 L1537.3 456.5 L1537.6 464.2 L1536.3 470.9 L1533.4 479.6 L1529.6 486.3 L1523.8 493.1 L1516.1 498.9 L1509.3 502.7 L1504.5 507.5 L1498.7 512.4 L1492.9 514.3 L1485.2 513.3 L1479.5 510.4 L1471.8 510.4 L1466.0 511.4 L1460.2 508.5 L1452.5 505.6 L1444.8 504.1 L1444.4 513.3 L1443.2 522.9 L1440.9 532.6 L1437.1 541.3 L1432.3 548.0 L1426.5 552.8 L1419.7 554.7 L1414.9 559.6 L1408.2 563.4 L1401.4 567.3 L1397.6 575.0 L1395.6 582.7 L1395.4 590.8 L1391.9 598.5 L1391.6 606.2 L1387.1 615.9 L1381.3 626.5 L1387.1 632.3 L1393.9 639.0 L1400.6 646.7 L1406.4 654.4 L1414.1 662.1 L1418.9 671.8 L1423.7 679.5 L1427.6 687.2 L1434.3 694.9 L1439.2 702.6 L1440.1 712.2 L1441.1 721.8 L1444.0 731.5 L1448.1 737.7 L1451.9 747.3 L1452.9 757.0 L1456.8 766.6 L1461.6 775.3 L1469.3 783.0 L1478.9 790.7 L1489.5 798.4 L1494.3 792.6 L1502.0 787.8 L1511.7 785.5 L1521.3 784.5 L1525.5 784.5 L1526.1 789.7 L1530.9 791.3 L1531.9 799.4 L1530.0 809.0 L1527.1 818.6 L1523.2 828.3 L1519.4 837.9 L1514.6 843.7 L1508.8 845.6 L1502.0 842.7 L1494.3 837.9 L1486.6 833.1 L1478.9 828.3 L1471.2 823.4 L1463.5 818.6 L1455.8 813.8 L1448.1 810.9 L1440.4 809.4 L1432.7 808.0 L1425.9 804.2 L1421.1 797.4 L1417.3 788.8 L1413.4 780.1 L1408.6 772.4 L1401.8 766.6 L1394.1 762.8 L1386.4 760.4 L1381.6 761.8 L1374.9 760.4 L1369.1 757.0 L1363.3 752.7 L1355.2 748.9 L1357.5 755.0 L1360.4 762.8 L1363.3 770.5 L1368.1 778.2 L1372.9 785.9 L1377.8 793.6 L1383.5 801.3 L1390.3 809.0 L1397.0 815.7 L1403.8 822.5 L1409.6 829.2 L1414.4 836.0 L1417.3 840.8 L1420.2 835.6 L1425.0 833.7 L1432.7 833.1 L1442.3 833.1 L1444.2 836.9 L1448.1 842.7 L1450.0 851.4 L1449.6 861.0 L1448.1 868.7 L1445.2 876.4 L1440.4 884.1 L1434.6 889.0 L1429.8 889.9 L1426.9 894.7 L1423.0 902.4 L1417.3 908.2 L1410.5 911.5 L1405.7 910.2 L1400.9 903.4 L1397.0 895.7 L1392.2 888.0 L1386.4 881.3 L1379.7 874.5 L1372.9 867.8 L1366.2 861.0 L1359.5 854.3 L1352.7 847.5 L1346.0 839.8 L1339.2 833.1 L1332.5 826.3 L1326.7 819.6 L1320.9 812.9 L1315.1 810.0 L1307.4 809.0 L1299.7 806.1 L1292.0 802.3 L1284.3 796.5 L1277.6 790.7 L1270.8 783.9 L1266.0 777.2 L1264.1 768.5 L1263.1 761.8 L1260.9 756.5 L1254.2 749.8 L1246.5 744.0 L1242.6 736.3 L1238.8 727.6 L1233.0 720.9 L1226.2 714.1 L1221.4 706.4 L1216.6 696.8 L1212.8 688.1 L1208.9 680.4 L1204.1 671.8 L1201.6 662.1 L1200.2 652.5 L1200.2 640.9 L1200.8 629.4 L1201.6 617.8 L1203.1 606.2 L1205.0 594.7 L1206.6 583.1 L1206.0 571.6 L1205.0 560.0 L1205.6 550.0 L1206.0 535.0 L1205.6 525.3 L1204.4 515.7 L1203.1 506.1 L1201.2 496.4 L1199.8 486.8 L1197.9 477.2 L1195.4 467.5 L1194.0 457.9 L1192.5 448.3 L1189.6 438.6 L1184.8 433.8 L1178.0 428.0 L1176.1 419.4 L1170.3 411.7 L1164.5 404.0 L1160.7 394.3 L1154.9 386.6 L1148.2 378.9 L1141.4 371.2 L1139.5 363.5 L1136.3 359.8 L1132.5 355.0 L1127.7 352.1 L1122.9 347.3 L1121.9 341.5 L1118.0 335.7 L1113.2 329.9 L1108.4 322.2 L1104.5 314.5 L1095.9 310.7 L1088.2 304.9 L1081.4 300.1 L1074.7 295.2 L1068.9 290.4 L1061.2 286.6 L1059.3 281.8 L1056.4 276.0 L1052.5 270.2 Z" fill="#212121" stroke="#212121" stroke-width="1.2" stroke-linejoin="round" filter="url(#fur)"/>
<rect x="1183.0" y="258.0" width="1" height="1" fill="#a8a8a8"/><rect x="1131.0" y="331.5" width="1" height="1" fill="#a8a8a8"/><rect x="1266.0" y="360.0" width="1" height="1" fill="#a8a8a8"/><rect x="1285.0" y="354.6" width="1" height="1" fill="#a8a8a8"/><rect x="1306.0" y="362.0" width="1" height="1" fill="#a8a8a8"/><rect x="1277.5" y="379.7" width="1" height="1" fill="#a8a8a8"/><rect x="1306.0" y="372.0" width="1" height="1" fill="#a8a8a8"/><rect x="1379.6" y="435.5" width="1" height="1" fill="#a8a8a8"/><rect x="1387.0" y="447.0" width="1" height="1" fill="#a8a8a8"/><rect x="1321.8" y="474.0" width="1" height="1" fill="#a8a8a8"/><rect x="1402.7" y="485.6" width="1" height="1" fill="#a8a8a8"/><rect x="1318.0" y="497.0" width="1" height="1" fill="#a8a8a8"/><rect x="1277.5" y="514.5" width="1" height="1" fill="#a8a8a8"/><rect x="1300.4" y="570.5" width="1" height="1" fill="#a8a8a8"/><rect x="1310.0" y="568.5" width="1" height="1" fill="#a8a8a8"/><rect x="1366.0" y="593.6" width="1" height="1" fill="#a8a8a8"/><rect x="1310.0" y="633.0" width="1" height="1" fill="#a8a8a8"/><rect x="1269.6" y="674.5" width="1" height="1" fill="#a8a8a8"/><rect x="1281.0" y="684.0" width="1" height="1" fill="#a8a8a8"/><rect x="1300.4" y="722.7" width="1" height="1" fill="#a8a8a8"/><rect x="1421.8" y="699.6" width="1" height="1" fill="#a8a8a8"/><rect x="1431.4" y="730.0" width="1" height="1" fill="#a8a8a8"/><rect x="1331.0" y="772.0" width="1" height="1" fill="#a8a8a8"/><rect x="1362.0" y="817.0" width="1" height="1" fill="#a8a8a8"/><rect x="1180.5" y="250.0" width="1" height="1" fill="#a8a8a8"/><rect x="1186.0" y="259.0" width="1" height="1" fill="#a8a8a8"/>
<path d="M1508.4 467.1 L1514.1 462.3 L1523.8 457.4 L1529.6 456.5 L1533.4 458.4 L1535.7 463.2 L1535.3 470.9 L1532.4 479.6 L1527.6 486.3 L1520.9 491.2 L1514.1 492.1 L1512.2 488.3 L1508.4 480.6 L1507.4 472.9 Z" fill="#4a86c6" stroke="#1c2634" stroke-width="1.3" stroke-linejoin="round"/>
<path d="M1529.6 456.5 L1512.2 488.3" stroke="#1c2634" stroke-width="1"/>
<path d="M1525.3 457.4 L1508.7 482.1" stroke="#1c2634" stroke-width="1"/>
<path d="M1533.8 459.4 L1516.5 491.5" stroke="#1c2634" stroke-width="1"/>
<path d="M1519.9 459.0 L1508.0 474.8" stroke="#1c2634" stroke-width="1"/>
<path d="M1512.2 488.3 L1532.6 479.0" stroke="#1c2634" stroke-width="1"/>
<path d="M1514.1 492.1 L1534.4 474.8" stroke="#1c2634" stroke-width="1"/>
<path d="M1534.4 463.2 L1521.8 490.6" stroke="#1c2634" stroke-width="1"/>
<path d="M1426.5 513.3 L1435.1 505.6 L1441.9 505.2 L1443.8 509.5 L1443.2 519.1 L1440.9 528.7 L1437.1 537.4 L1431.3 544.1 L1423.6 549.0 L1417.8 546.1 L1413.9 539.3 L1414.9 532.6 L1419.7 522.9 Z" fill="#4a86c6" stroke="#1c2634" stroke-width="1.3" stroke-linejoin="round"/>
<path d="M1440.9 505.6 L1417.8 544.1" stroke="#1c2634" stroke-width="1"/>
<path d="M1436.1 506.2 L1414.9 538.4" stroke="#1c2634" stroke-width="1"/>
<path d="M1443.0 513.3 L1424.0 548.4" stroke="#1c2634" stroke-width="1"/>
<path d="M1438.0 505.6 L1415.9 542.2" stroke="#1c2634" stroke-width="1"/>
<path d="M1442.5 522.9 L1430.3 544.5" stroke="#1c2634" stroke-width="1"/>
<path d="M1429.4 511.0 L1414.5 534.5" stroke="#1c2634" stroke-width="1"/>
<path d="M1443.2 507.9 L1420.7 547.6" stroke="#1c2634" stroke-width="1"/>
<path d="M1504.9 812.9 L1508.8 805.1 L1515.5 797.4 L1523.2 793.2 L1529.0 792.6 L1530.9 796.5 L1530.0 807.1 L1527.1 817.7 L1523.2 828.3 L1518.4 837.9 L1512.6 842.7 L1506.9 841.8 L1504.9 834.0 L1504.4 822.5 Z" fill="#4a86c6" stroke="#1c2634" stroke-width="1.3" stroke-linejoin="round"/>
<path d="M1519.4 795.5 L1519.8 816.7" stroke="#1c2634" stroke-width="1"/>
<path d="M1504.9 813.2 L1523.2 828.3" stroke="#1c2634" stroke-width="1"/>
<path d="M1504.9 813.2 L1519.4 795.5" stroke="#1c2634" stroke-width="1"/>
<path d="M1519.8 816.7 L1523.2 828.3" stroke="#1c2634" stroke-width="1"/>
<path d="M1505.5 820.6 L1518.4 837.9" stroke="#1c2634" stroke-width="1"/>
<path d="M1505.9 837.9 L1523.2 828.3" stroke="#1c2634" stroke-width="1"/>
<path d="M1519.8 816.7 L1530.0 807.1" stroke="#1c2634" stroke-width="1"/>
<path d="M1523.2 793.6 L1525.2 822.5" stroke="#1c2634" stroke-width="1"/>
<path d="M1506.9 841.8 L1519.8 834.0" stroke="#1c2634" stroke-width="1"/>
<path d="M1529.0 793.6 L1527.1 817.7" stroke="#1c2634" stroke-width="1"/>
<path d="M1423.0 870.7 L1425.0 857.2 L1429.8 847.5 L1436.5 843.7 L1444.2 843.7 L1448.1 849.5 L1449.1 859.1 L1447.7 868.7 L1444.2 877.4 L1438.5 885.1 L1431.7 889.0 L1427.9 882.2 Z" fill="#4a86c6" stroke="#1c2634" stroke-width="1.3" stroke-linejoin="round"/>
<path d="M1438.5 844.1 L1427.9 882.2" stroke="#1c2634" stroke-width="1"/>
<path d="M1438.5 844.1 L1431.7 889.0" stroke="#1c2634" stroke-width="1"/>
<path d="M1438.5 844.1 L1438.8 884.7" stroke="#1c2634" stroke-width="1"/>
<path d="M1447.3 853.3 L1432.7 888.4" stroke="#1c2634" stroke-width="1"/>
<path d="M1425.4 857.2 L1436.5 844.1" stroke="#1c2634" stroke-width="1"/>
<path d="M1442.3 844.1 L1434.6 887.0" stroke="#1c2634" stroke-width="1"/>
<path d="M1429.8 847.9 L1424.0 869.7" stroke="#1c2634" stroke-width="1"/>
<path d="M1448.5 862.9 L1436.1 886.5" stroke="#1c2634" stroke-width="1"/>
<path d="M1444.2 844.1 L1444.2 877.4" stroke="#1c2634" stroke-width="1"/>
<path d="M1432.7 846.0 L1425.9 876.4" stroke="#1c2634" stroke-width="1"/>
<g id="gizmo">
<path d="M691 907.2 L700 903 L709 901 L718 901 L727 903.4 L734.6 907.2 L713 921.6 Z" fill="#14a84a"/>
<path d="M698.5 908 L704 904.6 L712.6 903.2 L712.8 920.6 L706 916.2 Z" fill="#1a8ae8"/>
<path d="M713.2 903.2 L721 904.2 L727 907 L729.6 910.4 L716 920 L713 920.8 Z" fill="#d05a10"/>
<path d="M713.2 904 L716 904.4 L716.4 919.6 L713.2 920.6 Z" fill="#ff7a18"/>
<path d="M712.9 880.4 V920" stroke="#10984a" stroke-width="1.8"/>
<path d="M680.6 899.6 L696.6 908.8" stroke="#e87820" stroke-width="1.5"/>
<path d="M744.6 899.4 L732.4 907" stroke="#2a7ac8" stroke-width="1.5"/>
</g>
</svg>
<div class="t" style="left:708.6px;top:865.7px;font-size:13px;line-height:17px;color:#222;">z</div>
<div class="t" style="left:669.6px;top:888.1px;font-size:13px;line-height:17px;color:#555;">y</div>
<div class="t" style="left:748.2px;top:887.9px;font-size:13px;line-height:17px;color:#555;">x</div>
<div class="a" style="left:645px;top:1013px;width:1275px;height:1px;background:#d9d9d9;"></div>
<div class="a" style="left:744px;top:1015px;width:1px;height:22px;background:#dedede;"></div>
<div class="a" style="left:944px;top:1015px;width:1px;height:22px;background:#dedede;"></div>
<div class="t" style="left:646.8px;top:1017.6px;font-size:12px;line-height:16px;color:#000;transform:scaleX(0.9228);-webkit-text-stroke:0.25px #000;">450x420x400</div>
<div class="t" style="left:749.0px;top:1017.6px;font-size:12px;line-height:16px;color:#000;transform:scaleX(0.9370);-webkit-text-stroke:0.25px #000;">Select Triangles</div>
<div class="t" style="left:949.2px;top:1017.6px;font-size:12px;line-height:16px;color:#000;-webkit-text-stroke:0.25px #000;">Press Shift to add/remove triangles to/from the current selection.</div>
<div class="a" style="left:1437px;top:1016px;width:474px;height:16px;background:#e6e6e6;border:1px solid #bcbcbc;border-right-color:#8a8a8a;"></div>
</div>
</body>
</html>
